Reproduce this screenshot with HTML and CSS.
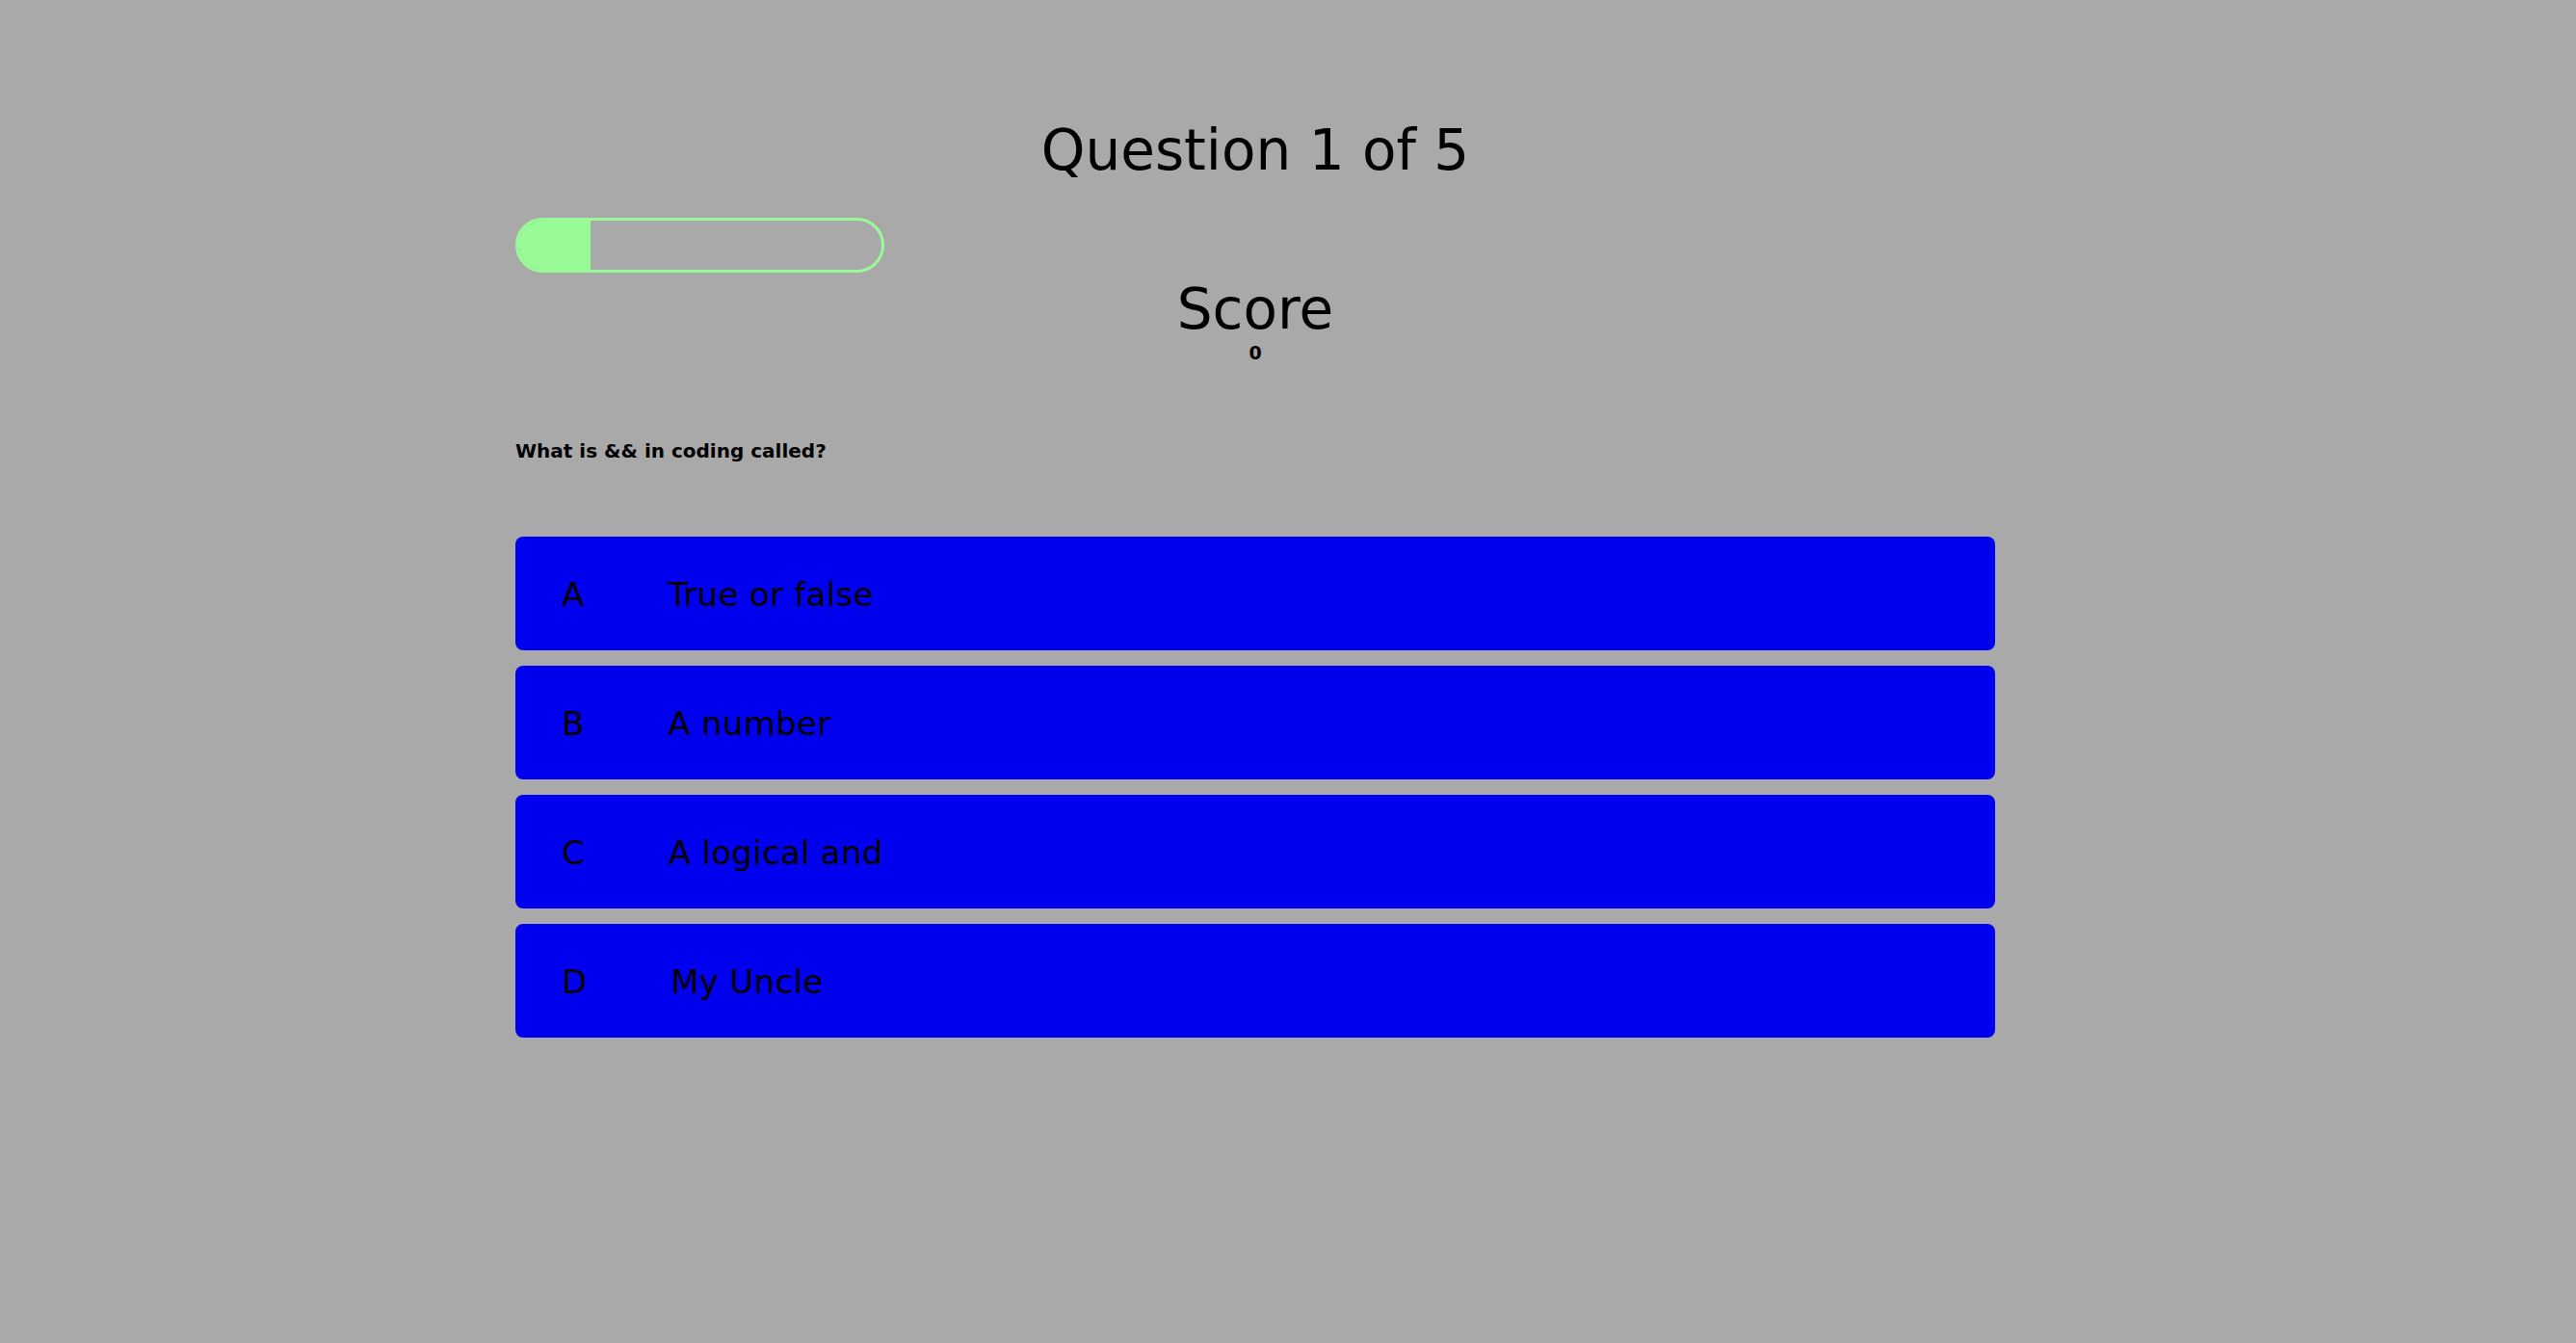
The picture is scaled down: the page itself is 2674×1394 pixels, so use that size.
FILE: index.html
```html
<!DOCTYPE html>
<html lang="en">
<head>
<meta charset="utf-8">
<title>Quiz</title>
<link rel="stylesheet" href="styles.css">
</head>
<body>
<main class="quiz">
  <h1 class="counter">Question 1 of 5</h1>
  <div class="progress"><div class="progress-fill" style="width:20%"></div></div>
  <section class="score">
    <h2 class="score-title">Score</h2>
    <div class="score-value">0</div>
  </section>
  <p class="question">What is &amp;&amp; in coding called?</p>
  <div class="answers">
    <button class="answer"><span class="letter">A</span><span class="text">True or false</span></button>
    <button class="answer"><span class="letter">B</span><span class="text">A number</span></button>
    <button class="answer"><span class="letter">C</span><span class="text">A logical and</span></button>
    <button class="answer"><span class="letter">D</span><span class="text">My Uncle</span></button>
  </div>
</main>
</body>
</html>
```
FILE: styles.css
```css
html, body {
  margin: 0;
  padding: 0;
  background: #a9a9a9;
  font-family: "DejaVu Sans", Verdana, sans-serif;
  color: #000;
}

.quiz {
  margin-left: 535px;
  width: 1536px;
  padding-top: 122px;
  display: flex;
  flex-direction: column;
}

.counter {
  margin: 0;
  font-size: 58px;
  line-height: 68px;
  font-weight: normal;
  text-align: center;
}

.progress {
  margin-top: 36px;
  width: 383px;
  height: 57px;
  box-sizing: border-box;
  border: 3px solid #98fb98;
  border-radius: 30px;
  overflow: hidden;
}

.progress-fill {
  height: 100%;
  background: #98fb98;
}

.score {
  margin-top: 4px;
  text-align: center;
}

.score-title {
  margin: 0;
  font-size: 58px;
  line-height: 68px;
  font-weight: normal;
}

.score-value {
  font-size: 19px;
  line-height: 22px;
  font-weight: bold;
}

.question {
  margin: 80px 0 0;
  font-size: 20px;
  line-height: 23px;
  font-weight: bold;
}

.answers {
  margin-top: 77px;
  display: flex;
  flex-direction: column;
  gap: 16px;
}

.answer {
  display: flex;
  align-items: center;
  height: 118px;
  padding: 1px 0 0 48px;
  border: none;
  border-radius: 8px;
  background: #0000ee;
  color: #000;
  font-family: "DejaVu Sans", Verdana, sans-serif;
  font-size: 34px;
  text-align: left;
  cursor: pointer;
}

.letter {
  margin-right: 87px;
  flex: none;
}

.text {
  letter-spacing: 0.3px;
}
```
